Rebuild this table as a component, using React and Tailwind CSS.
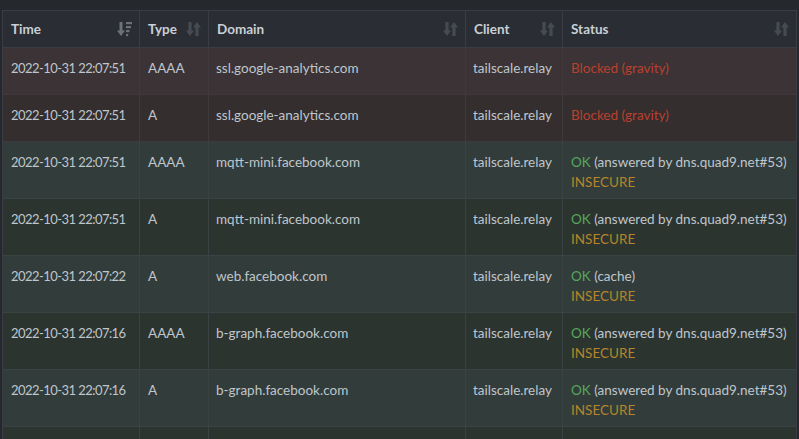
import React from 'react'

const cols = ['w-[137px]', 'w-[69px]', 'w-[257px]', 'w-[97px]', 'flex-1']

const rows = [
  { time: '2022-10-31 22:07:51', type: 'AAAA', domain: 'ssl.google-analytics.com', blocked: true },
  { time: '2022-10-31 22:07:51', type: 'A', domain: 'ssl.google-analytics.com', blocked: true },
  { time: '2022-10-31 22:07:51', type: 'AAAA', domain: 'mqtt-mini.facebook.com', reply: 'answered by dns.quad9.net#53' },
  { time: '2022-10-31 22:07:51', type: 'A', domain: 'mqtt-mini.facebook.com', reply: 'answered by dns.quad9.net#53' },
  { time: '2022-10-31 22:07:22', type: 'A', domain: 'web.facebook.com', reply: 'cache' },
  { time: '2022-10-31 22:07:16', type: 'AAAA', domain: 'b-graph.facebook.com', reply: 'answered by dns.quad9.net#53' },
  { time: '2022-10-31 22:07:16', type: 'A', domain: 'b-graph.facebook.com', reply: 'answered by dns.quad9.net#53' },
]

function SortIcon() {
  return (
    <svg width="15" height="16" viewBox="0 0 15 16" className="text-[#464b52]">
      <path d="M4 1v10" stroke="currentColor" strokeWidth="3.2" />
      <path d="M0 9.5h8L4 15z" fill="currentColor" />
      <path d="M11 15V5" stroke="currentColor" strokeWidth="3.2" />
      <path d="M7 6.5h8L11 1z" fill="currentColor" />
    </svg>
  )
}

function SortDescIcon() {
  return (
    <svg width="15" height="16" viewBox="0 0 15 16" className="text-[#6d7279]">
      <path d="M4 1v10" stroke="currentColor" strokeWidth="3" />
      <path d="M0 9.5h8L4 15z" fill="currentColor" />
      <rect x="9" y="1" width="6" height="2.2" fill="currentColor" />
      <rect x="9" y="5" width="5" height="2.2" fill="currentColor" />
      <rect x="9" y="9" width="3.5" height="2.2" fill="currentColor" />
      <rect x="9" y="13" width="2.2" height="2.2" fill="currentColor" />
    </svg>
  )
}

function Header() {
  const labels = ['Time', 'Type', 'Domain', 'Client', 'Status']
  return (
    <div className="flex h-[37px] bg-[#2a2d33] border-b border-[#3a3e44]">
      {labels.map((l, i) => (
        <div
          key={l}
          className={`${cols[i]} flex items-center justify-between pl-[8px] pr-[7px] ${i < 4 ? 'border-r border-[#3a3e44]' : ''}`}
        >
          <span className="font-bold text-[13.5px] text-[#c9d0d6]">{l}</span>
          {i === 0 ? <SortDescIcon /> : <SortIcon />}
        </div>
      ))}
    </div>
  )
}

function Row({ r, i }) {
  let bg
  if (r.blocked) bg = i % 2 === 0 ? 'bg-[#3b3335]' : 'bg-[#342e2f]'
  else bg = i % 2 === 0 ? 'bg-[#323c3b]' : 'bg-[#2c3430]'
  const border = r.blocked ? 'border-[#3f393b]' : 'border-[#3a4243]'
  const cell = `pr-1 pt-[10px] leading-[20px] whitespace-nowrap overflow-hidden border-r ${border}`
  return (
    <div className={`flex ${r.blocked ? 'h-[47px]' : 'h-[57px]'} ${bg} border-b ${border}`}>
      <div className={`${cols[0]} pl-[8px] ${cell} text-[13px] tracking-[-0.55px]`}>{r.time}</div>
      <div className={`${cols[1]} pl-[8px] ${cell}`}>{r.type}</div>
      <div className={`${cols[2]} pl-[7px] ${cell}`}>{r.domain}</div>
      <div className={`${cols[3]} pl-[7px] ${cell}`}>tailscale.relay</div>
      <div className={`${cols[4]} pl-[8px] pr-2 pt-[10px] leading-[20px] whitespace-nowrap`}>
        {r.blocked ? (
          <span className="text-[#b9412f]">Blocked (gravity)</span>
        ) : (
          <>
            <div>
              <span className="text-[#55a85a]">OK</span> ({r.reply})
            </div>
            <div className="text-[#b5852a]">INSECURE</div>
          </>
        )}
      </div>
    </div>
  )
}

function EmptyRow() {
  return (
    <div className="flex h-[57px] bg-[#2c3430]">
      {cols.map((c, i) => (
        <div key={i} className={`${c} ${i < 4 ? 'border-r border-[#3a4243]' : ''}`} />
      ))}
    </div>
  )
}

export default function App() {
  return (
    <div className="w-[799px] h-[439px] overflow-hidden bg-[#25282d] pt-[10px] pl-[2px] pr-[2px] font-['Lato',sans-serif] text-[13.5px] text-[#bfc6cc]">
      <div className="border-t border-l border-r border-[#3a3e44]">
        <Header />
        {rows.map((r, i) => (
          <Row key={i} r={r} i={i} />
        ))}
        <EmptyRow />
      </div>
    </div>
  )
}
